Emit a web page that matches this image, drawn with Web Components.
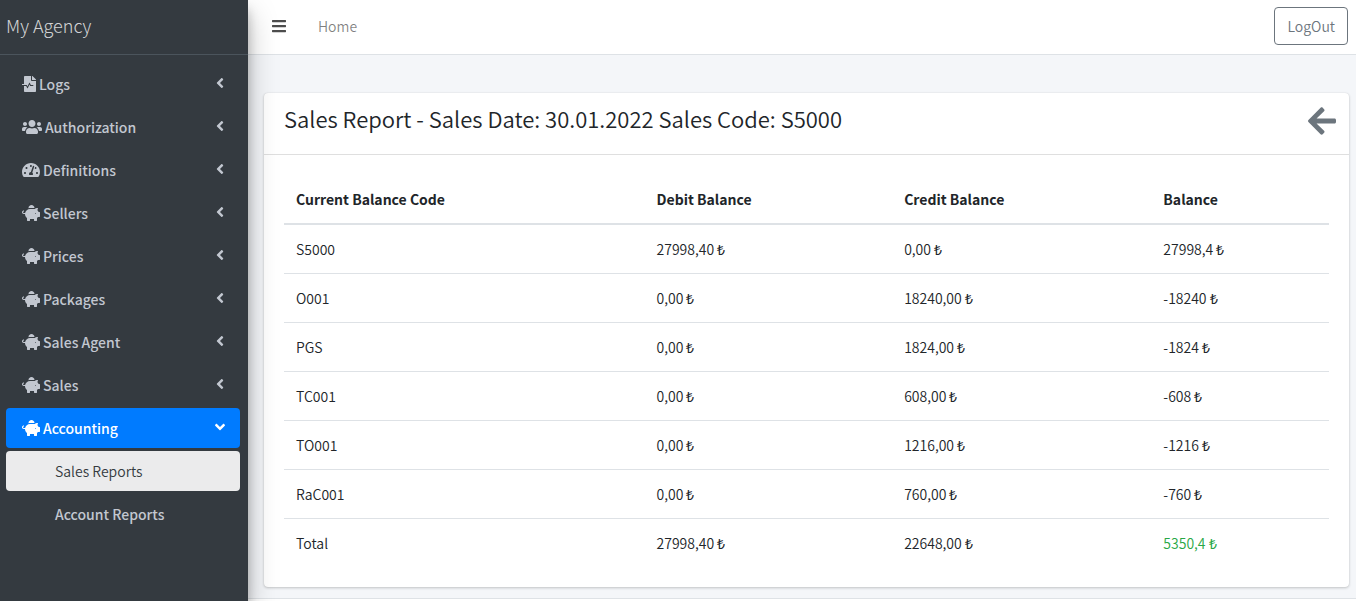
<!DOCTYPE html>
<html lang="en">
<head>
<meta charset="utf-8">
<meta name="viewport" content="width=device-width, initial-scale=1">
<title>My Agency</title>
<style>
  body {
    margin: 0;
    font-family: "Noto Sans CJK SC", "Open Sans", sans-serif;
    font-size: 14px;
    font-weight: 350;
    line-height: 24px;
    color: #212529;
    background: #f4f6f9;
  }
</style>
</head>
<body>
<app-shell>
  <side-bar slot="sidebar" brand="My Agency">
    <nav-item icon="file" label="Logs"></nav-item>
    <nav-item icon="users" label="Authorization"></nav-item>
    <nav-item icon="gauge" label="Definitions"></nav-item>
    <nav-item icon="piggy" label="Sellers"></nav-item>
    <nav-item icon="piggy" label="Prices"></nav-item>
    <nav-item icon="piggy" label="Packages"></nav-item>
    <nav-item icon="piggy" label="Sales Agent"></nav-item>
    <nav-item icon="piggy" label="Sales"></nav-item>
    <nav-item icon="piggy" label="Accounting" open>
      <nav-subitem label="Sales Reports" active></nav-subitem>
      <nav-subitem label="Account Reports"></nav-subitem>
    </nav-item>
  </side-bar>
  <top-bar slot="header"></top-bar>
  <report-card>
    <span slot="title">Sales Report - Sales Date: 30.01.2022 Sales Code: S5000</span>
    <balance-table></balance-table>
  </report-card>
</app-shell>

<script>
const ICONS = {
  bars: [448, "M16 132h416c8.837 0 16-7.163 16-16V76c0-8.837-7.163-16-16-16H16C7.163 60 0 67.163 0 76v40c0 8.837 7.163 16 16 16zm0 160h416c8.837 0 16-7.163 16-16v-40c0-8.837-7.163-16-16-16H16c-8.837 0-16 7.163-16 16v40c0 8.837 7.163 16 16 16zm0 160h416c8.837 0 16-7.163 16-16v-40c0-8.837-7.163-16-16-16H16c-8.837 0-16 7.163-16 16v40c0 8.837 7.163 16 16 16z"],
  arrow: [448, "M257.5 445.1l-22.2 22.2c-9.4 9.4-24.6 9.4-33.9 0L7 273c-9.4-9.4-9.4-24.6 0-33.9L201.4 44.7c9.4-9.4 24.6-9.4 33.9 0l22.2 22.2c9.5 9.5 9.3 25-.4 34.3L136.6 216H424c13.3 0 24 10.7 24 24v32c0 13.3-10.7 24-24 24H136.6l120.5 114.8c9.8 9.3 10 24.8.4 34.3z"],
  angle: [256, "M31.7 239l136-136c9.4-9.4 24.6-9.4 33.9 0l22.6 22.6c9.4 9.4 9.4 24.6 0 33.9L127.9 256l96.4 96.4c9.4 9.4 9.4 24.6 0 33.9L201.7 409c-9.4 9.4-24.6 9.4-33.9 0l-136-136c-9.5-9.4-9.5-24.6-.1-34z"],
  users: [640, "M96 224c35.3 0 64-28.7 64-64s-28.7-64-64-64-64 28.7-64 64 28.7 64 64 64zm448 0c35.3 0 64-28.7 64-64s-28.7-64-64-64-64 28.7-64 64 28.7 64 64 64zm32 32h-64c-17.6 0-33.5 7.1-45.1 18.6 40.3 22.1 68.9 62 75.1 109.4h66c17.7 0 32-14.3 32-32v-32c0-35.3-28.7-64-64-64zm-256 0c61.9 0 112-50.1 112-112S381.9 32 320 32 208 82.1 208 144s50.1 112 112 112zm76.8 32h-8.3c-20.8 10-43.9 16-68.5 16s-47.6-6-68.5-16h-8.3C179.6 288 128 339.6 128 403.2V432c0 26.5 21.5 48 48 48h288c26.5 0 48-21.5 48-48v-28.8c0-63.6-51.6-115.2-115.2-115.2zm-223.7-13.4C161.5 263.1 145.6 256 128 256H64c-35.3 0-64 28.7-64 64v32c0 17.7 14.3 32 32 32h65.9c6.3-47.4 34.9-87.3 75.2-109.4z"],
  gauge: [576, "M288 32C128.94 32 0 160.94 0 320c0 52.8 14.25 102.26 39.06 144.8 5.61 9.62 16.3 15.2 27.44 15.2h443c11.14 0 21.83-5.58 27.44-15.2C561.75 422.26 576 372.8 576 320c0-159.06-128.94-288-288-288zm0 64c14.71 0 26.58 10.13 30.32 23.65-1.11 2.26-2.64 4.23-3.45 6.67l-9.22 27.67c-5.13 3.49-10.97 6.01-17.64 6.01-17.67 0-32-14.33-32-32S270.33 96 288 96zM96 384c-17.67 0-32-14.33-32-32s14.33-32 32-32 32 14.33 32 32-14.33 32-32 32zm48-160c-17.67 0-32-14.33-32-32s14.33-32 32-32 32 14.33 32 32-14.33 32-32 32zm246.77-72.41l-61.33 184C343.13 347.33 352 364.54 352 384c0 11.72-3.38 22.55-8.88 32H232.88c-5.5-9.45-8.88-20.28-8.88-32 0-33.94 26.5-61.43 59.9-63.59l61.34-184.01c4.17-12.56 17.73-19.45 30.36-15.17 12.57 4.19 19.35 17.79 15.17 30.36zm14.66 57.2l15.52-46.55c3.47-1.29 7.13-2.23 11.05-2.23 17.67 0 32 14.33 32 32s-14.33 32-32 32c-11.38-.01-20.89-6.28-26.57-15.22zM480 384c-17.67 0-32-14.33-32-32s14.33-32 32-32 32 14.33 32 32-14.33 32-32 32z"],
  piggy: [576, "M560 224h-29.5c-8.8-20-21.6-37.7-37.4-52.5L512 96h-32c-29.4 0-55.4 13.5-73 34.3-7.6-1.1-15.1-2.3-23-2.3H256c-77.4 0-141.9 55-156.8 128H56c-14.8 0-26.5-13.5-23.5-28.8C34.7 215.8 45.4 208 57 208h1c3.3 0 6-2.7 6-6v-20c0-3.3-2.7-6-6-6-28.5 0-53.9 20.4-57.5 48.6C-3.9 258.8 22.7 288 56 288h40c0 52.2 25.4 98.1 64 127.3V496c0 8.8 7.2 16 16 16h64c8.8 0 16-7.2 16-16v-48h128v48c0 8.8 7.2 16 16 16h64c8.8 0 16-7.2 16-16v-80.7c11.8-8.9 22.3-19.4 31.3-31.3H560c8.8 0 16-7.2 16-16V240c0-8.8-7.2-16-16-16zm-128 64c-8.8 0-16-7.2-16-16s7.2-16 16-16 16 7.2 16 16-7.2 16-16 16zM256 96h128c5.4 0 10.7.4 15.9.8 0-.3.1-.5.1-.8 0-53-43-96-96-96s-96 43-96 96c0 2.1.5 4.1.6 6.2 15.2-3.9 31-6.2 47.4-6.2z"],
  file: [448, "M288 136V0H88C74.7 0 64 10.7 64 24v232H8c-4.4 0-8 3.6-8 8v16c0 4.4 3.6 8 8 8h140.9c3 0 5.8 1.7 7.2 4.4l19.9 39.8 56.8-113.7c2.9-5.9 11.4-5.9 14.3 0l34.7 69.5H352c8.8 0 16 7.2 16 16s-7.2 16-16 16h-89.9L240 275.8l-56.8 113.7c-2.9 5.9-11.4 5.9-14.3 0L134.1 320H64v168c0 13.3 10.7 24 24 24h336c13.3 0 24-10.7 24-24V160H312c-13.2 0-24-10.8-24-24zm153-31L343.1 7c-4.5-4.5-10.6-7-17-7H320v128h128v-6.1c0-6.3-2.5-12.4-7-16.9z"]
};

class BaseElement extends HTMLElement {
  connectedCallback() {
    if (this.shadowRoot) return;
    this.attachShadow({ mode: "open" }).innerHTML = this.render();
  }
}

customElements.define("ui-icon", class extends BaseElement {
  render() {
    const [width, path] = ICONS[this.getAttribute("name")];
    return `<style>
      :host { display: inline-flex; flex: none; }
      svg { display: block; height: var(--icon-size, 16px); fill: currentColor; }
    </style>
    <svg viewBox="0 0 ${width} 512" aria-hidden="true"><path d="${path}"/></svg>`;
  }
});

customElements.define("app-shell", class extends BaseElement {
  render() {
    return `<style>
      :host { display: flex; min-height: 100vh; }
      slot[name="sidebar"]::slotted(*) { flex: none; width: 248px; }
      .page { flex: 1; min-width: 0; display: flex; flex-direction: column; }
      main { padding: 38px 7px 11px 16px; }
      footer { flex: 1; background: #fff; border-top: 1px solid #dee2e6; }
    </style>
    <slot name="sidebar"></slot>
    <div class="page">
      <slot name="header"></slot>
      <main><slot></slot></main>
      <footer></footer>
    </div>`;
  }
});

customElements.define("side-bar", class extends BaseElement {
  render() {
    return `<style>
      :host {
        display: block; position: relative; z-index: 1;
        background: #343a40; color: #c2c7d0;
        box-shadow: 0 14px 28px rgba(0,0,0,.25), 0 10px 10px rgba(0,0,0,.22);
      }
      .brand {
        display: block; padding: 10px 6px 14px; line-height: 30px;
        font-size: 18px; font-weight: 300; color: rgba(255,255,255,.8);
        text-decoration: none; border-bottom: 1px solid #4b545c;
      }
      nav { display: flex; flex-direction: column; gap: 3px; padding: 9px 8px 8px 6px; }
    </style>
    <a class="brand" href="#">${this.getAttribute("brand")}</a>
    <nav><slot></slot></nav>`;
  }
});

customElements.define("nav-item", class extends BaseElement {
  render() {
    return `<style>
      :host { display: flex; flex-direction: column; gap: 3px; }
      a {
        display: flex; align-items: center; gap: 3px;
        padding: 8px 16px; border-radius: 4px;
        color: inherit; text-decoration: none; font-weight: 500;
      }
      .label { flex: 1; }
      .arrow { margin-bottom: 3px; }
      :host([open]) a { background: #007bff; color: #fff; }
      :host([open]) .arrow { transform: rotate(-90deg); }
    </style>
    <a href="#"><ui-icon name="${this.getAttribute("icon")}"></ui-icon><span class="label">${this.getAttribute("label")}</span><ui-icon class="arrow" name="angle"></ui-icon></a>
    <slot></slot>`;
  }
});

customElements.define("nav-subitem", class extends BaseElement {
  render() {
    return `<style>
      :host { display: block; }
      a {
        display: block; padding: 8px 16px 8px 49px; border-radius: 4px;
        color: #c2c7d0; text-decoration: none; font-weight: 500;
      }
      :host([active]) a { background: rgba(255,255,255,.9); color: #343a40; font-weight: 350; }
    </style>
    <a href="#">${this.getAttribute("label")}</a>`;
  }
});

customElements.define("top-bar", class extends BaseElement {
  render() {
    return `<style>
      :host {
        display: flex; align-items: center; justify-content: space-between;
        padding: 7px 8px 9px 24px; background: #fff; border-bottom: 1px solid #dee2e6;
      }
      nav { display: flex; align-items: center; gap: 32px; }
      button { font: inherit; background: none; cursor: pointer; }
      .toggle { display: flex; padding: 0; border: 0; color: rgba(0,0,0,.7); }
      a { color: rgba(0,0,0,.5); text-decoration: none; }
      .logout { padding: 6px 12px; color: #6c757d; border: 1px solid #6c757d; border-radius: 4px; }
    </style>
    <nav>
      <button class="toggle" aria-label="Toggle menu"><ui-icon name="bars"></ui-icon></button>
      <a href="#">Home</a>
    </nav>
    <button class="logout">LogOut</button>`;
  }
});

customElements.define("report-card", class extends BaseElement {
  render() {
    return `<style>
      :host {
        display: block; background: #fff; border-radius: 4px;
        box-shadow: 0 0 1px rgba(0,0,0,.125), 0 1px 3px rgba(0,0,0,.2);
      }
      header {
        display: flex; justify-content: space-between; align-items: flex-start;
        padding: 12px 13px 17px 20px; border-bottom: 1px solid rgba(0,0,0,.125);
      }
      h1 { margin: 0; font-size: 22px; line-height: 26px; font-weight: 350; }
      a { display: flex; color: #6c757d; --icon-size: 32px; }
      .body { padding: 20px; }
    </style>
    <header>
      <h1><slot name="title"></slot></h1>
      <a href="#" aria-label="Back"><ui-icon name="arrow"></ui-icon></a>
    </header>
    <div class="body"><slot></slot></div>`;
  }
});

customElements.define("balance-table", class extends BaseElement {
  render() {
    const rows = [
      ["S5000", "27998,40 ₺", "0,00 ₺", "27998,4 ₺"],
      ["O001", "0,00 ₺", "18240,00 ₺", "-18240 ₺"],
      ["PGS", "0,00 ₺", "1824,00 ₺", "-1824 ₺"],
      ["TC001", "0,00 ₺", "608,00 ₺", "-608 ₺"],
      ["TO001", "0,00 ₺", "1216,00 ₺", "-1216 ₺"],
      ["RaC001", "0,00 ₺", "760,00 ₺", "-760 ₺"],
      ["Total", "27998,40 ₺", "22648,00 ₺", "5350,4 ₺"]
    ];
    const body = rows.map(row => `<tr>${row.map(cell => `<td>${cell}</td>`).join("")}</tr>`).join("");
    return `<style>
      :host { display: block; }
      table { width: 100%; table-layout: fixed; border-collapse: separate; border-spacing: 0; }
      .code { width: 34.5%; }
      .debit { width: 23.7%; }
      .credit { width: 24.8%; }
      th, td { box-sizing: border-box; padding: 12px; text-align: left; }
      th { font-weight: 700; border-bottom: 2px solid #dee2e6; }
      td { border-bottom: 1px solid #dee2e6; }
      tr:last-child td { border-bottom: 0; }
      tr:last-child td:last-child { color: #28a745; }
    </style>
    <table>
      <thead><tr>
        <th class="code" scope="col">Current Balance Code</th>
        <th class="debit" scope="col">Debit Balance</th>
        <th class="credit" scope="col">Credit Balance</th>
        <th scope="col">Balance</th>
      </tr></thead>
      <tbody>${body}</tbody>
    </table>`;
  }
});
</script>
</body>
</html>
